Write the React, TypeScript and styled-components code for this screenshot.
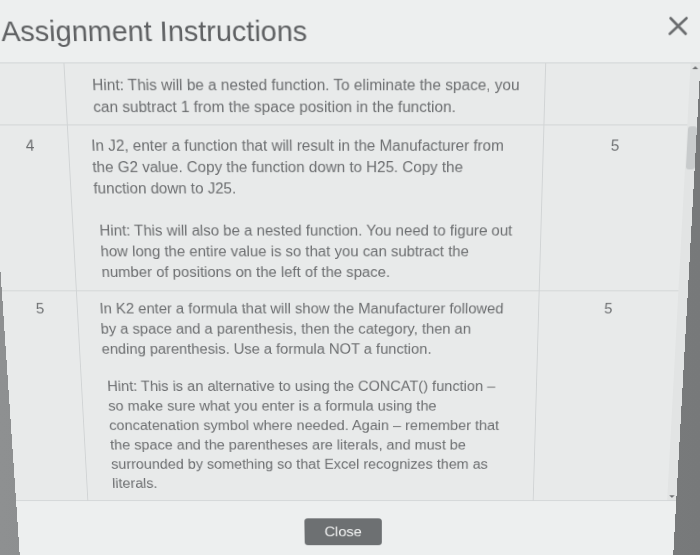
import React from 'react';
import styled, { createGlobalStyle } from 'styled-components';

type Task = {
  num?: string;
  points?: string;
  text?: string[];
  hint: string[];
};

const tasks: Task[] = [
  {
    hint: [
      'Hint: This will be a nested function. To eliminate the space, you',
      'can subtract 1 from the space position in the function.',
    ],
  },
  {
    num: '4',
    points: '5',
    text: [
      'In J2, enter a function that will result in the Manufacturer from',
      'the G2 value. Copy the function down to H25. Copy the',
      'function down to J25.',
    ],
    hint: [
      'Hint: This will also be a nested function. You need to figure out',
      'how long the entire value is so that you can subtract the',
      'number of positions on the left of the space.',
    ],
  },
  {
    num: '5',
    points: '5',
    text: [
      'In K2 enter a formula that will show the Manufacturer followed',
      'by a space and a parenthesis, then the category, then an',
      'ending parenthesis. Use a formula NOT a function.',
    ],
    hint: [
      'Hint: This is an alternative to using the CONCAT() function \u2013',
      'so make sure what you enter is a formula using the',
      'concatenation symbol where needed. Again \u2013 remember that',
      'the space and the parentheses are literals, and must be',
      'surrounded by something so that Excel recognizes them as',
      'literals.',
    ],
  },
];

// row paddings: [top, bottom, gap before the hint]
const spacing = [
  [11, 7, 0],
  [10, 9, 23],
  [8, 9, 20],
];

const GlobalStyle = createGlobalStyle`
  html, body {
    margin: 0;
    padding: 0;
  }
  body {
    background: #7f8182;
    font-family: "Liberation Sans", Arial, sans-serif;
    overflow: hidden;
  }
`;

const Stage = styled.div`
  width: 700px;
  height: 555px;
  overflow: hidden;
  background: linear-gradient(90deg, #8e9091, #77797a);
`;

// the photo is taken at an angle, so the dialog leans back a little
const Modal = styled.div`
  width: 722px;
  height: 680px;
  margin-left: -18px;
  background: #edefef;
  display: flex;
  flex-direction: column;
  transform-origin: 398px 0;
  transform: perspective(1000px) rotateX(-9.7deg);
`;

const Header = styled.header`
  height: 64px;
  flex: none;
  display: flex;
  align-items: center;
  justify-content: space-between;
  padding: 0 14px 0 17px;
  box-sizing: border-box;
`;

const Title = styled.h1`
  margin: 0;
  font-size: 29px;
  line-height: 40px;
  font-weight: 400;
  color: #5f6163;
`;

const CloseIcon = styled.button`
  align-self: flex-start;
  margin-top: 16px;
  width: 21px;
  height: 21px;
  padding: 0;
  border: 0;
  background: none;
  display: flex;
  color: #6a6c6e;
`;

const ScrollArea = styled.div`
  height: 492px;
  flex: none;
  box-sizing: border-box;
  display: flex;
  background: #e8eaea;
  border-top: 1px solid #d1d4d5;
  border-bottom: 1px solid #d1d4d5;
`;

const Rows = styled.div`
  flex: 1;
  overflow: hidden;
`;

const Row = styled.div<{ $padTop: number; $padBottom: number }>`
  display: grid;
  grid-template-columns: 78px 487px 1fr;
  border-bottom: 1px solid #d1d4d5;

  & > div {
    padding-top: ${(p) => p.$padTop}px;
    padding-bottom: ${(p) => p.$padBottom}px;
  }
`;

const Cell = styled.div`
  color: #6c6e70;
  font-size: 15.6px;
  line-height: 23px;
  white-space: nowrap;
  border-left: 1px solid #d1d4d5;

  &:first-child {
    border-left: 0;
  }
`;

const NumCell = styled(Cell)`
  text-align: center;
`;

const TextCell = styled(Cell)`
  padding-left: 23px;
`;

const Para = styled.p`
  margin: 0;
`;

const HintPara = styled(Para)<{ $gap: number }>`
  margin-top: ${(p) => p.$gap}px;
  margin-left: 4px;
`;

const ScrollBar = styled.div`
  width: 10px;
  flex: none;
  display: flex;
  flex-direction: column;
  align-items: center;
  background: #e2e4e4;
`;

const Arrow = styled.span<{ $down?: boolean }>`
  margin: ${(p) => (p.$down ? 'auto 0 3px' : '3px 0 0')};
  width: 0;
  height: 0;
  border-left: 3px solid transparent;
  border-right: 3px solid transparent;
  ${(p) =>
    p.$down ? 'border-top: 3px solid #6d6f71;' : 'border-bottom: 3px solid #6d6f71;'}
`;

const Thumb = styled.span<{ $offset: number }>`
  margin-top: ${(p) => p.$offset}px;
  width: 9px;
  height: 46px;
  border-radius: 3px;
  background: #c8cbcc;
`;

const Footer = styled.footer`
  display: flex;
  justify-content: center;
  padding: 21px 7px 0 0;
`;

const CloseButton = styled.button`
  width: 85px;
  height: 33px;
  border: 0;
  border-radius: 4px;
  background: #6d7072;
  color: #f4f5f5;
  font-family: "Liberation Sans", Arial, sans-serif;
  font-size: 16px;
`;

const lines = (list: string[]) =>
  list.map((line, i) => (
    <React.Fragment key={i}>
      {i > 0 && <br />}
      {line}
    </React.Fragment>
  ));

export default function App() {
  return (
    <>
      <GlobalStyle />
      <Stage>
        <Modal>
          <Header>
            <Title>Assignment Instructions</Title>
            <CloseIcon aria-label="Close">
              <svg width="21" height="21" viewBox="0 0 21 21">
                <path
                  d="M2.5 2.5 L18.5 18.5 M18.5 2.5 L2.5 18.5"
                  stroke="currentColor"
                  strokeWidth="2.6"
                  strokeLinecap="round"
                />
              </svg>
            </CloseIcon>
          </Header>

          <ScrollArea>
            <Rows>
              {tasks.map((t, i) => {
                const [top, bottom, gap] = spacing[i];
                return (
                  <Row key={i} $padTop={top} $padBottom={bottom}>
                    <NumCell>{t.num}</NumCell>
                    <TextCell>
                      {t.text && <Para>{lines(t.text)}</Para>}
                      <HintPara $gap={gap}>{lines(t.hint)}</HintPara>
                    </TextCell>
                    <NumCell>{t.points}</NumCell>
                  </Row>
                );
              })}
            </Rows>
            <ScrollBar>
              <Arrow />
              <Thumb $offset={60} />
              <Arrow $down />
            </ScrollBar>
          </ScrollArea>

          <Footer>
            <CloseButton>Close</CloseButton>
          </Footer>
        </Modal>
      </Stage>
    </>
  );
}
